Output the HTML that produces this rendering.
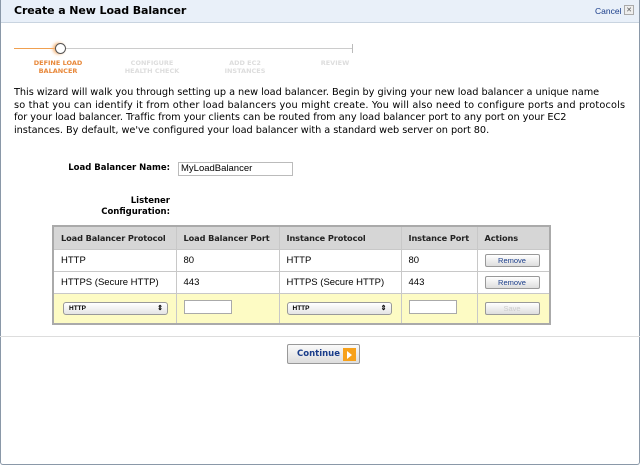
<!DOCTYPE html>
<html><head><style>
*{margin:0;padding:0;box-sizing:border-box}
body{width:640px;height:465px;background:#fff;font-family:"DejaVu Sans",sans-serif;position:relative;overflow:hidden;color:#000}
.frame{position:absolute;left:0;top:0;width:640px;height:465px;border:1px solid #8a98a8;border-top:none;border-radius:0 0 3px 3px}
.hdr{position:absolute;left:1px;top:0;width:638px;height:23px;background:#e9f0f9;border-bottom:1px solid #c9d4e0}
.title{position:absolute;left:13px;top:4px;font-size:11px;font-weight:bold;letter-spacing:-0.1px}
.cancel{position:absolute;left:594px;top:6px;font-size:8.5px;color:#1a3d8a;font-family:"Liberation Sans",sans-serif}
.x{position:absolute;left:623px;top:5px;width:10px;height:10px;border:1px solid #aaa;background:#eee;font-size:7px;text-align:center;line-height:8px;color:#555}
.abs{position:absolute}
.step{position:absolute;font-size:6.5px;font-weight:bold;text-align:center;line-height:8px;color:#ddd}
p.intro{position:absolute;left:14px;top:87px;width:626px;font-size:9.75px;line-height:12.6px;letter-spacing:-0.05px}
.lbl{position:absolute;font-size:8.5px;font-weight:bold;text-align:right}
table{position:absolute;left:52px;top:225px;width:499px;border-collapse:collapse;font-size:9.5px;font-family:"Liberation Sans",sans-serif;table-layout:fixed}
td,th{border:1px solid #c8c8c8;padding:0 7px;text-align:left;height:22px;white-space:nowrap;overflow:hidden}
th{background:#d6d6d6;height:23px;color:#222;font-family:"DejaVu Sans",sans-serif;font-size:8.2px;letter-spacing:-0.1px}
tr.y td{background:#fdfbc4;height:31px}
table{border:2px solid #aaa}
.btn{display:inline-block;width:55px;height:13px;border:1px solid #999;border-radius:2px;background:linear-gradient(#fff,#ddd);font-size:7.5px;color:#1a3d8a;text-align:center;line-height:11px}
.sel{display:inline-block;width:105px;height:13px;border:1px solid #999;border-radius:3px;background:linear-gradient(#fff,#e4e4e4);font-size:6.5px;font-weight:bold;line-height:11px;padding-left:5px;position:relative}
.sel:after{content:"⇕";position:absolute;right:4px;top:0;font-size:7px}
.inp{display:inline-block;width:48px;height:14px;border:1px solid #aaa;background:#fff}
</style></head><body>
<div class="frame"></div>
<div class="hdr"><div class="title">Create a New Load Balancer</div><div class="cancel">Cancel</div><div class="x">✕</div></div>
<div class="abs" style="left:14px;top:48px;width:338px;height:1px;background:#ccc"></div>
<div class="abs" style="left:14px;top:48px;width:42px;height:1px;background:#f0a050"></div>
<div class="abs" style="left:352px;top:44px;width:1px;height:9px;background:#bbb"></div>
<div class="abs" style="left:55px;top:43px;width:11px;height:11px;border:1px solid #555;border-radius:50%;background:#fff;box-shadow:-2px 0 3px #f5b070"></div>
<div class="step" style="left:28px;top:59px;width:60px;color:#e8883a">DEFINE LOAD<br>BALANCER</div>
<div class="step" style="left:118px;top:59px;width:68px">CONFIGURE<br>HEALTH CHECK</div>
<div class="step" style="left:218px;top:59px;width:54px">ADD EC2<br>INSTANCES</div>
<div class="step" style="left:310px;top:59px;width:50px">REVIEW</div>
<p class="intro">This wizard will walk you through setting up a new load balancer. Begin by giving your new load balancer a unique name<br><span style="letter-spacing:0.15px">so that you can identify it from other load balancers you might create. You will also need to configure ports and protocols</span><br>for your load balancer. Traffic from your clients can be routed from any load balancer port to any port on your EC2<br>instances. By default, we've configured your load balancer with a standard web server on port 80.</p>
<div class="lbl" style="left:50px;top:163px;width:120px">Load Balancer Name:</div>
<div class="abs" style="left:178px;top:162px;width:115px;height:14px;border:1px solid #bbb;font-size:9.5px;padding-left:2px;line-height:12px;font-family:'Liberation Sans',sans-serif">MyLoadBalancer</div>
<div class="lbl" style="left:50px;top:196px;width:120px;line-height:11px">Listener<br>Configuration:</div>
<table>
<colgroup><col style="width:123px"><col style="width:103px"><col style="width:122px"><col style="width:76px"><col></colgroup>
<tr><th>Load Balancer Protocol</th><th>Load Balancer Port</th><th>Instance Protocol</th><th>Instance Port</th><th>Actions</th></tr>
<tr><td>HTTP</td><td>80</td><td>HTTP</td><td>80</td><td><span class="btn">Remove</span></td></tr>
<tr><td>HTTPS (Secure HTTP)</td><td>443</td><td>HTTPS (Secure HTTP)</td><td>443</td><td><span class="btn">Remove</span></td></tr>
<tr class="y"><td style="padding-left:9px"><span class="sel">HTTP</span></td><td><span class="inp"></span></td><td><span class="sel">HTTP</span></td><td><span class="inp"></span></td><td><span class="btn" style="color:#ccc">Save</span></td></tr>
</table>
<div class="abs" style="left:0;top:336px;width:640px;height:1px;background:#ddd"></div>
<div class="abs" style="left:287px;top:344px;width:73px;height:20px;border:1px solid #999;border-radius:2px;background:linear-gradient(#fafafa,#ddd);font-size:8.5px;font-weight:bold;color:#1a3d8a;line-height:18px;padding-left:9px">Continue<span style="position:absolute;right:3px;top:3px;width:13px;height:13px;background:#f7a11a"><span style="position:absolute;left:4px;top:3px;border-left:5px solid #fff;border-top:4px solid transparent;border-bottom:4px solid transparent"></span></span></div>
</body></html>
